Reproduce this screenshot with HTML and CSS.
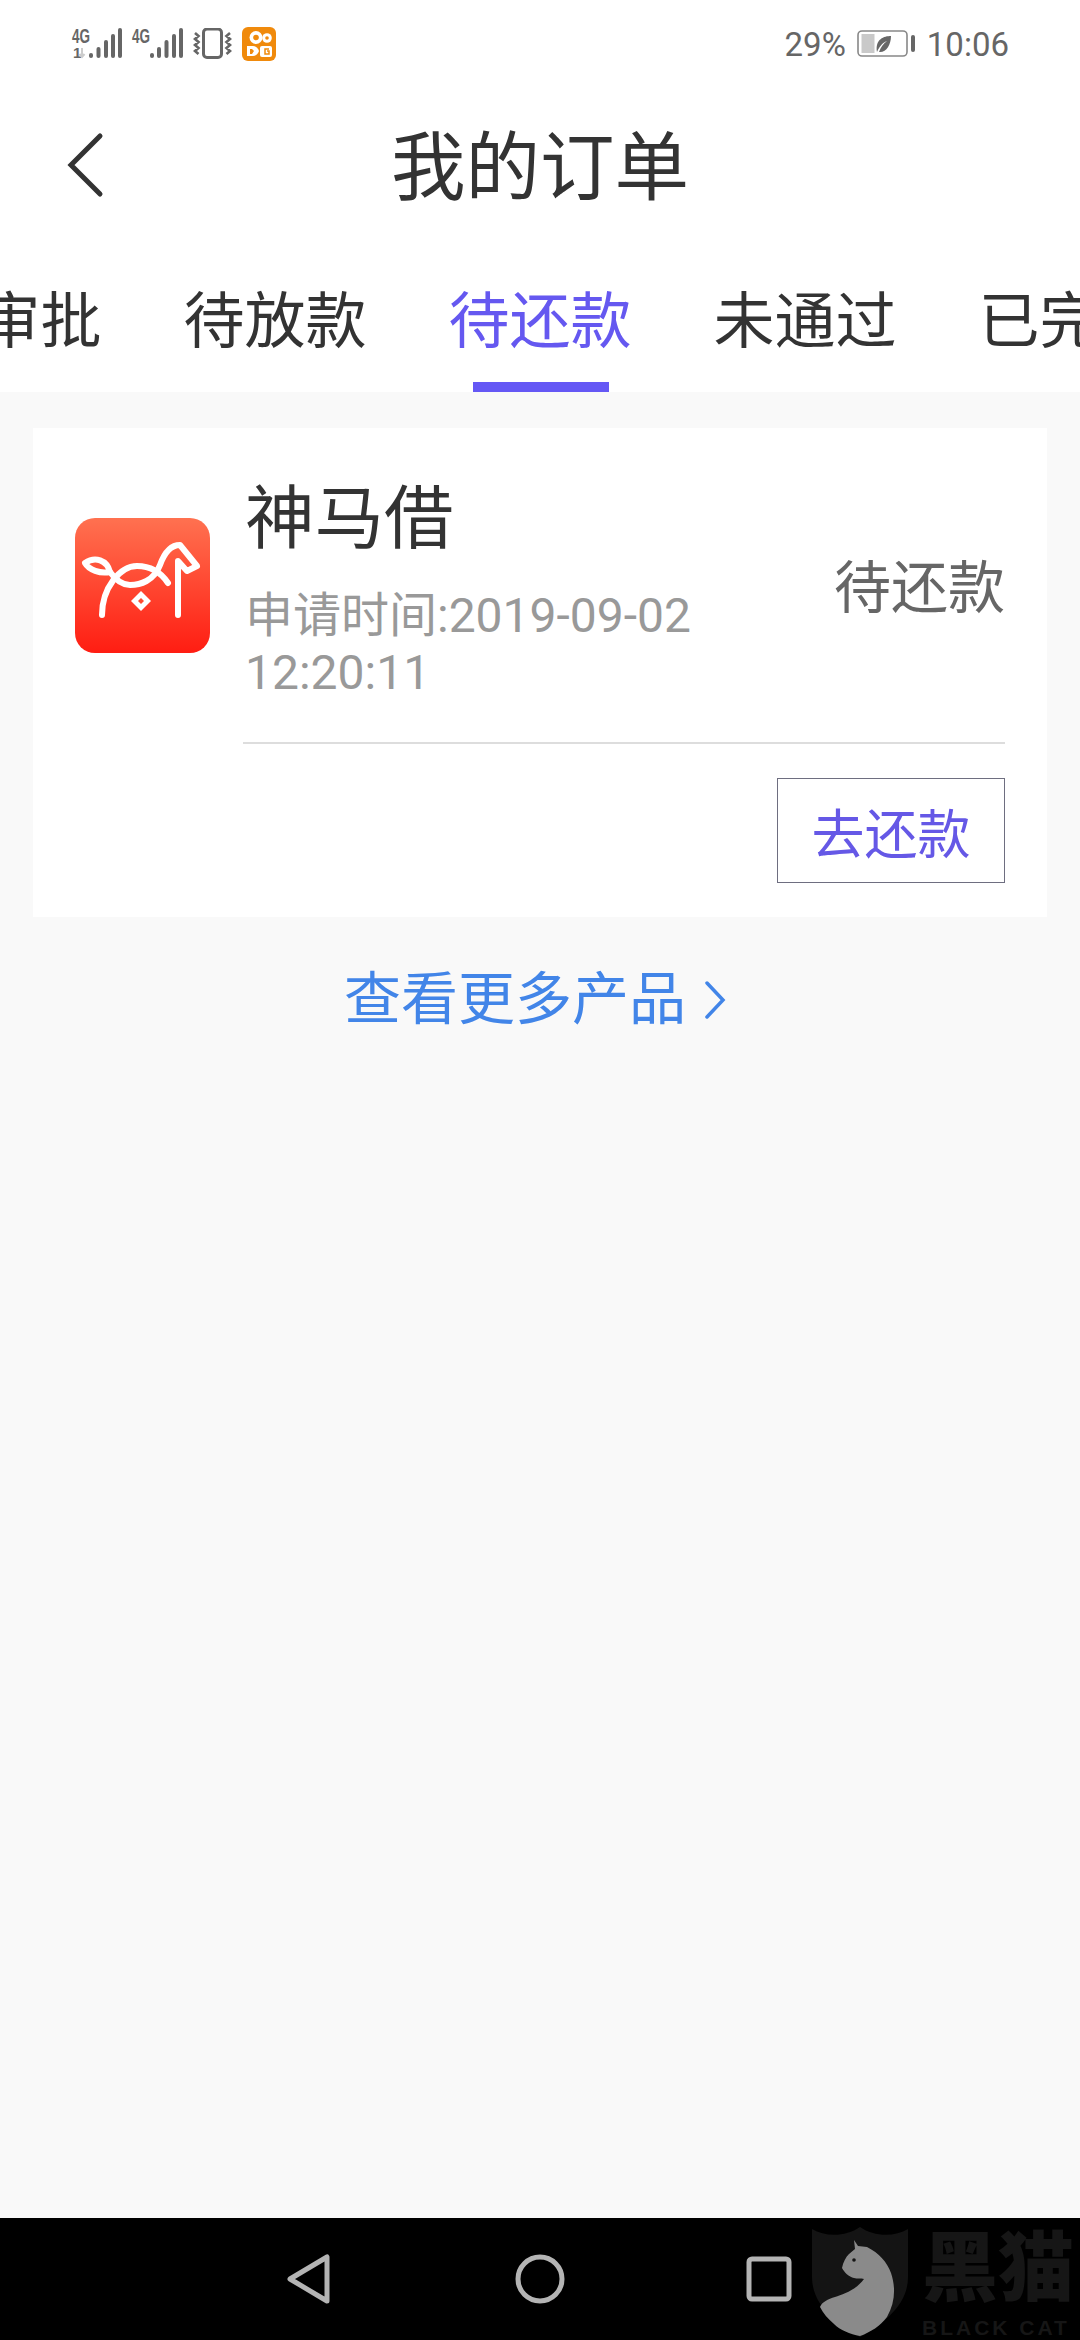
FILE: index.html
```html
<!DOCTYPE html>
<html lang="zh">
<head>
<meta charset="utf-8">
<title>我的订单</title>
<link rel="stylesheet" href="styles.css">
</head>
<body>
<div class="phone">
  <div class="status">
    <div class="status-left">
      <svg width="50" height="32" viewBox="0 0 50 32" class="sig"><text x="0" y="15" class="net" textLength="18" lengthAdjust="spacingAndGlyphs">4G</text><text x="1" y="30" class="net sm">1</text><path d="M10 20v9M7.500 26l2.500 3 2.500-3" class="dl"/><g fill="#666"><rect x="17" y="25" width="4" height="5" rx="2"/><rect x="24.500" y="19" width="4" height="11" rx="2"/><rect x="32" y="12" width="4" height="18" rx="2"/><rect x="39" y="6" width="4" height="24" rx="2"/><rect x="46" y="0" width="4" height="30" rx="2"/></g></svg>
      <svg width="51" height="32" viewBox="0 0 51 32" class="sig"><text x="0" y="15" class="net" textLength="18" lengthAdjust="spacingAndGlyphs">4G</text><g fill="#666"><rect x="18" y="25" width="4" height="5" rx="2"/><rect x="25" y="19" width="4" height="11" rx="2"/><rect x="32.500" y="12" width="4" height="18" rx="2"/><rect x="40" y="6" width="4" height="24" rx="2"/><rect x="47" y="0" width="4" height="30" rx="2"/></g></svg>
      <svg width="39" height="32" viewBox="0 0 39 32" class="vib"><rect x="10.500" y="1" width="18" height="28.500" rx="3.500" fill="none" stroke="#666" stroke-width="3"/><path d="M2 5l3.500 3-3.500 3 3.500 3-3.500 3 3.500 3-3.500 3 3.500 3M37 5l-3.500 3 3.500 3-3.500 3 3.500 3-3.500 3 3.500 3-3.500 3" fill="none" stroke="#666" stroke-width="2.600"/></svg>
      <svg width="34" height="34" viewBox="0 0 34 34" class="app"><rect width="34" height="34" rx="6" fill="#f08a0c"/><circle cx="14" cy="10.500" r="6.500" fill="#fff"/><circle cx="25" cy="11" r="4.800" fill="#fff"/><circle cx="14" cy="10.500" r="2.800" fill="#f08a0c"/><circle cx="25" cy="11" r="1.800" fill="#f08a0c"/><path d="M5 19h6c3 0 5 2.500 6 5-1 3-3 5-6 5H5z" fill="#fff"/><rect x="18" y="19" width="12" height="11" rx="2" fill="#fff"/><path d="M8 22h2l2 2-2 3H8z" fill="#f08a0c"/><path d="M27 22h-4v5h4v-3h-2" fill="none" stroke="#f08a0c" stroke-width="1.500"/></svg>
    </div>
    <div class="status-right">
      <span>29%</span>
      <svg width="59" height="30" viewBox="0 0 59 30" class="batt"><rect x="1" y="2" width="49" height="25" rx="4" fill="none" stroke="#888" stroke-width="1.600"/><rect x="4.500" y="5" width="13" height="19" fill="#c9c9c9"/><path d="M54 8a2 2 0 0 1 4 0v13a2 2 0 0 1-4 0z" fill="#666"/><path d="M20 23c3-7 7-10 10-11-4 3-6 6-8 11 7 1 12-7 12-16-7 0-16 3-14 16z" fill="#666"/></svg>
      <span>10:06</span>
    </div>
  </div>

  <header class="nav">
    <svg class="back" width="38" height="66" viewBox="0 0 38 66"><path d="M33 4L4 33l29 29" fill="none" stroke="#333" stroke-width="5" stroke-linecap="round"/></svg>
    <h1 class="title">我的订单</h1>
  </header>

  <nav class="tabs">
    <div class="tab">待审批</div>
    <div class="tab">待放款</div>
    <div class="tab active">待还款</div>
    <div class="tab">未通过</div>
    <div class="tab">已完成</div>
  </nav>

  <main class="content">
    <section class="card">
      <div class="card-top">
        <svg class="logo" width="135" height="135" viewBox="0 0 135 135">
          <defs><linearGradient id="lg" x1="0" y1="0" x2="0" y2="1"><stop offset="0" stop-color="#ff7150"/><stop offset="1" stop-color="#ff1d12"/></linearGradient></defs>
          <rect width="135" height="135" rx="20" fill="url(#lg)"/>
          <g fill="none" stroke="#fff" stroke-width="6" stroke-linecap="round" stroke-linejoin="round">
            <path d="M103 97V43l9 10 10-5-17-21c-8 0-15 6-20 20-6 16-20 20-30 20-8 0-15-6-20-13"/>
            <path d="M27 97c0-27 18-49 35-49 13 0 23 5 31 17"/>
            <path d="M10 45c10-7 22-3 25 9-10 2-21-2-25-9z"/>
          </g>
          <path d="M66 73l10 10-10 10-10-10z" fill="#fff"/>
          <path d="M66 80l3 3-3 3-3-3z" fill="#ff4a30"/>
        </svg>
        <div class="info">
          <div class="name">神马借</div>
          <div class="time">申请时间:2019-09-02 12:20:11</div>
        </div>
        <div class="state">待还款</div>
      </div>
      <div class="card-bottom">
        <button class="pay">去还款</button>
      </div>
    </section>
    <div class="more">
      <span>查看更多产品</span>
      <svg width="22" height="40" viewBox="0 0 22 40"><path d="M3 3l16 17L3 37" fill="none" stroke="#4285e8" stroke-width="3.500" stroke-linecap="round"/></svg>
    </div>
  </main>

  <footer class="sysnav">
    <svg class="k-back" width="44" height="50" viewBox="0 0 44 50"><path d="M3 25L40 3v44z" fill="none" stroke="#b4b4b4" stroke-width="5" stroke-linejoin="round"/></svg>
    <svg class="k-home" width="50" height="50" viewBox="0 0 50 50"><circle cx="25" cy="25" r="22" fill="none" stroke="#b4b4b4" stroke-width="5"/></svg>
    <svg class="k-recent" width="46" height="46" viewBox="0 0 46 46"><rect x="3" y="3" width="40" height="40" rx="3" fill="none" stroke="#b4b4b4" stroke-width="5"/></svg>
    <div class="mark">
      <svg width="96" height="110" viewBox="0 0 96 110"><path d="M0 2c13 8 34 8 48-2 14 10 35 10 48 2v48c0 28-24 46-48 60C24 96 0 78 0 50z" fill="#141414"/><path d="M42 13l4 6 9 1c12 6 20 15 24 26 5 15 4 30-4 44-7 9-16 15-27 19-10-2-20-6-26-12-6-5-11-11-14-17 2-5 8-8 15-10 8-3 20-6 29-18-3-1-7 0-10-1-5-1-10-6-12-10 1-6 4-11 7-14l6-5z" fill="#8a8a8a"/><circle cx="42" cy="33" r="1.800" fill="#141414"/></svg>
      <div class="mark-text"><div class="mark-cn">黑猫</div><div class="mark-en">BLACK CAT</div></div>
    </div>
  </footer>
</div>
</body>
</html>
```
FILE: styles.css
```css
*{box-sizing:border-box;margin:0;padding:0}
html,body{width:1080px;height:2340px;overflow:hidden}
body{font-family:"Roboto","Noto Sans CJK SC",sans-serif;background:#fff}
.phone{width:1080px;height:2340px;display:flex;flex-direction:column;overflow:hidden}
.status{height:88px;flex:none;display:flex;justify-content:space-between;align-items:center;padding:0 71px 0 72px;color:#666}
.status-left{display:flex;align-items:center;gap:10px}
.sig{overflow:visible}
.net{font:bold 20px "Liberation Sans",sans-serif;fill:#666}
.net.sm{font-size:15px}
.dl{fill:none;stroke:#ccc;stroke-width:2}
.status-right{display:flex;align-items:center;gap:11px;font-size:33px;color:#666}
.nav{height:158px;flex:none;display:flex;align-items:center;justify-content:center;position:relative;padding-top:4px}
.back{position:absolute;left:67px;top:44px}
.title{font-weight:400;font-size:74.500px;color:#333;line-height:1}
.tabs{height:146px;flex:none;display:flex;justify-content:center;background:#fff}
.tab{flex:none;width:265px;height:146px;display:flex;justify-content:center;padding-top:34px;font-size:61px;line-height:84px;color:#333;position:relative;white-space:nowrap}
.tab.active{color:#6558f0}
.tab.active::after{content:"";position:absolute;left:65px;width:136px;bottom:0;height:10px;background:#6558f5}
.content{flex:1;background:#f9f9f9;padding:36px 33px 0;display:flex;flex-direction:column}
.card{background:#fff;height:489px;flex:none;padding:0 42px;display:flex;flex-direction:column}
.card-top{display:flex;align-items:center;height:314px;flex:none}
.logo{flex:none}
.info{margin-left:35px;width:500px;align-self:flex-start;padding-top:50px}
.name{font-size:69.500px;line-height:84px;color:#333}
.time{font-size:48px;line-height:57px;color:#999;margin-top:25px}
.state{margin-left:auto;font-size:57px;line-height:70px;color:#666;margin-top:8px}
.card-bottom{margin-left:168px;border-top:2px solid #ddd;flex:1;display:flex;justify-content:flex-end;padding-top:34px}
.pay{width:228px;height:105px;border:1px solid #6e6e80;background:#fff;color:#6558e6;font:53px "Noto Sans CJK SC",sans-serif}
.more{margin-top:47px;padding-right:10px;display:flex;justify-content:center;align-items:center;gap:18px;color:#4285e8;font-size:57px;line-height:72px}
.sysnav{height:122px;flex:none;background:#000;position:relative}
.sysnav svg{position:absolute}
.k-back{left:287px;top:36px}
.k-home{left:515px;top:36px}
.k-recent{left:746px;top:38px}
.mark{position:absolute;left:812px;top:9px;width:268px;height:113px;display:flex;overflow:hidden}
.mark svg{position:static;flex:none}
.mark-text{margin-left:14px;color:#161616;white-space:nowrap}
.mark-cn{font-size:76px;font-weight:900;line-height:84px}
.mark-en{font:bold 21px "Liberation Sans",sans-serif;letter-spacing:3px;line-height:26px;margin-top:4px}
```
